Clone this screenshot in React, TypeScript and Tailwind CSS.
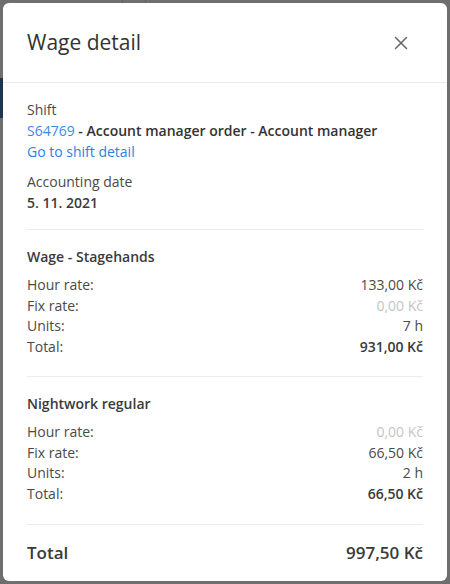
import React from 'react';
import { X } from 'lucide-react';

type Row = { label: string; value: string; tone?: 'muted' | 'bold' };

const Section: React.FC<{ title: string; rows: Row[]; last?: boolean }> = ({ title, rows, last }) => (
    <div className={`pt-4 border-b border-[#ececec] ${last ? 'pb-[19px]' : 'pb-[18px]'}`}>
        <h3 className="font-semibold text-[#3a3a3a] leading-[21px]">{title}</h3>
        <div className="mt-2">
            {rows.map((r) => (
                <div key={r.label} className="flex justify-between leading-[20.7px]">
                    <span className="text-[#4a4a4a]">{r.label}</span>
                    <span
                        className={
                            r.tone === 'muted'
                                ? 'text-[#c4c4c4]'
                                : r.tone === 'bold'
                                ? 'font-semibold text-[#3a3a3a]'
                                : 'text-[#4a4a4a]'
                        }
                    >
                        {r.value}
                    </span>
                </div>
            ))}
        </div>
    </div>
);

const App: React.FC = () => {
    return (
        <div
            className="relative w-[450px] h-[584px] bg-[#6e6e6e] p-[3px] overflow-hidden text-[14px]"
            style={{ fontFamily: '"Open Sans", "Noto Sans", sans-serif' }}
        >
            {/* dimmed page behind the dialog */}
            <div className="absolute left-0 top-[78px] w-[3px] h-[40px] bg-[#1d3550]"></div>
            <div className="absolute left-[122px] top-0 w-px h-[3px] bg-[#626262]"></div>
            <div className="absolute left-[145px] top-0 w-px h-[3px] bg-[#626262]"></div>

            {/* Dialog */}
            <div className="relative bg-white rounded-[6px] h-full flex flex-col">
                <div className="h-[80px] border-b border-[#ececec] flex items-center justify-between pl-6 pr-[38px]">
                    <h2 className="text-[21px] text-[#333] leading-none">Wage detail</h2>
                    <X size={22} strokeWidth={1.6} className="text-[#666] -mr-[3px]" />
                </div>

                <div className="px-6 flex-1 flex flex-col">
                    <div className="pt-4 pb-4 border-b border-[#ececec] leading-[21px]">
                        <p className="text-[#4a4a4a]">Shift</p>
                        <p className="text-[#333] font-semibold">
                            <span className="text-[#3c8ae6] font-normal">S64769</span> - Account manager order - Account manager
                        </p>
                        <p className="text-[#2f7fdc]">Go to shift detail</p>
                        <p className="mt-[9px] text-[#4a4a4a]">Accounting date</p>
                        <p className="font-semibold text-[#3a3a3a]">5. 11. 2021</p>
                    </div>

                    <Section
                        title="Wage - Stagehands"
                        rows={[
                            { label: 'Hour rate:', value: '133,00 Kč' },
                            { label: 'Fix rate:', value: '0,00 Kč', tone: 'muted' },
                            { label: 'Units:', value: '7 h' },
                            { label: 'Total:', value: '931,00 Kč', tone: 'bold' },
                        ]}
                    />

                    <Section
                        title="Nightwork regular"
                        last
                        rows={[
                            { label: 'Hour rate:', value: '0,00 Kč', tone: 'muted' },
                            { label: 'Fix rate:', value: '66,50 Kč' },
                            { label: 'Units:', value: '2 h' },
                            { label: 'Total:', value: '66,50 Kč', tone: 'bold' },
                        ]}
                    />

                    <div className="flex-1 flex items-center justify-between text-[17px] font-semibold text-[#3a3a3a]">
                        <span>Total</span>
                        <span>997,50 Kč</span>
                    </div>
                </div>
            </div>
        </div>
    );
};

export default App;
